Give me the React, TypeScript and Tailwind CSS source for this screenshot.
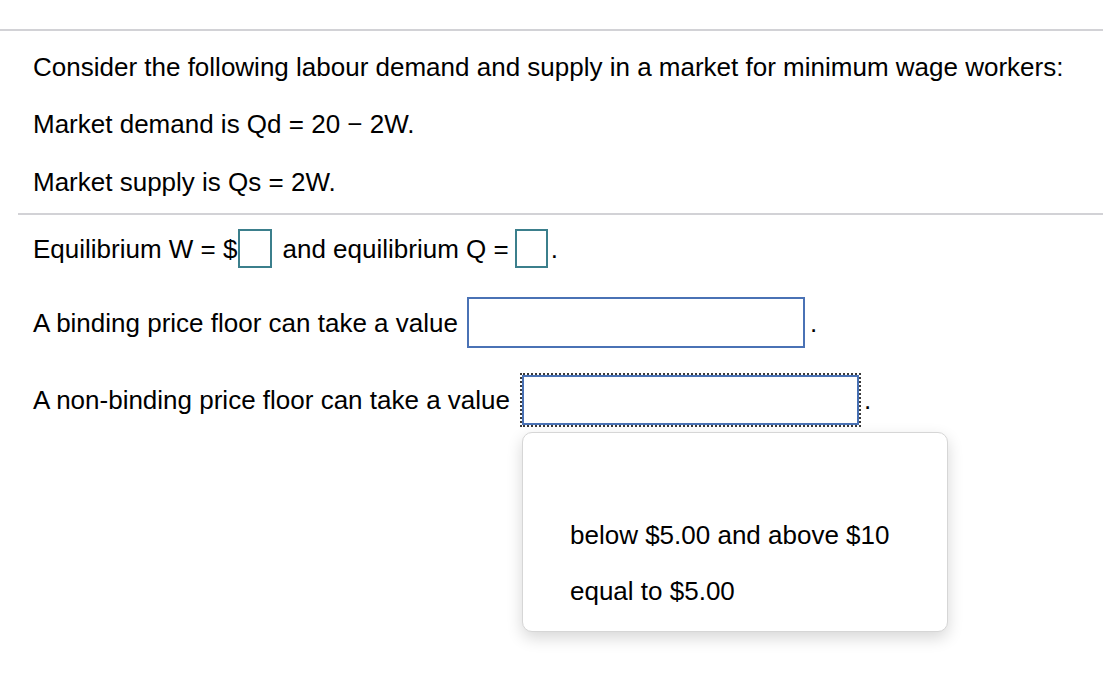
export default function App() {
  return (
    <div
      className="relative min-h-[688px] bg-white text-black"
      style={{ fontFamily: '"Liberation Sans", Arial, sans-serif' }}
    >
      <div className="h-[29px]" />
      <div className="border-t-2 border-[#d2d2d6]" />

      <div className="pl-[33px] text-[26px] leading-[28px]">
        <p className="mt-[22px]">
          Consider the following labour demand and supply in a market for minimum wage workers:
        </p>
        <p className="mt-[29px]">Market demand is Qd = 20 − 2W.</p>
        <p className="mt-[30px]">Market supply is Qs = 2W.</p>
      </div>

      <div className="ml-[18px] mt-[17px] border-t-2 border-[#d2d2d6]" />

      <div className="pl-[33px] text-[26px] leading-[28px]">
        <div className="mt-[14px] flex items-center">
          <span>Equilibrium W = $</span>
          <span className="ml-[1px] h-[39px] w-[34px] border-2 border-[#3b7f8c]" />
          <span className="ml-[10px]">and equilibrium Q =</span>
          <span className="ml-[6px] h-[39px] w-[33px] border-2 border-[#3b7f8c]" />
          <span className="ml-[3px]">.</span>
        </div>

        <div className="mt-[29px] flex items-center">
          <span>A binding price floor can take a value</span>
          <span className="ml-[9px] h-[51px] w-[338px] border-2 border-[#4a72b5]" />
          <span className="ml-[5px]">.</span>
        </div>

        <div className="mt-[25px] flex items-center">
          <span>A non-binding price floor can take a value</span>
          <div className="relative ml-[10px]">
            <div className="border-2 border-dotted border-[#3a3a3a]">
              <div className="h-[50px] w-[337px] border-2 border-[#4a72b5] bg-white" />
            </div>
            <div className="absolute left-[2px] top-[59px] w-[426px] rounded-[10px] border border-[#d6d6d6] bg-white pb-[12px] pt-[18px] shadow-[0_6px_16px_rgba(0,0,0,0.16)]">
              <div className="h-[56px]" />
              <div className="flex h-[56px] items-center pl-[47px] text-[26px]">
                below $5.00 and above $10
              </div>
              <div className="flex h-[56px] items-center pl-[47px] text-[26px]">
                equal to $5.00
              </div>
            </div>
          </div>
          <span className="ml-[3px]">.</span>
        </div>
      </div>
    </div>
  );
}
